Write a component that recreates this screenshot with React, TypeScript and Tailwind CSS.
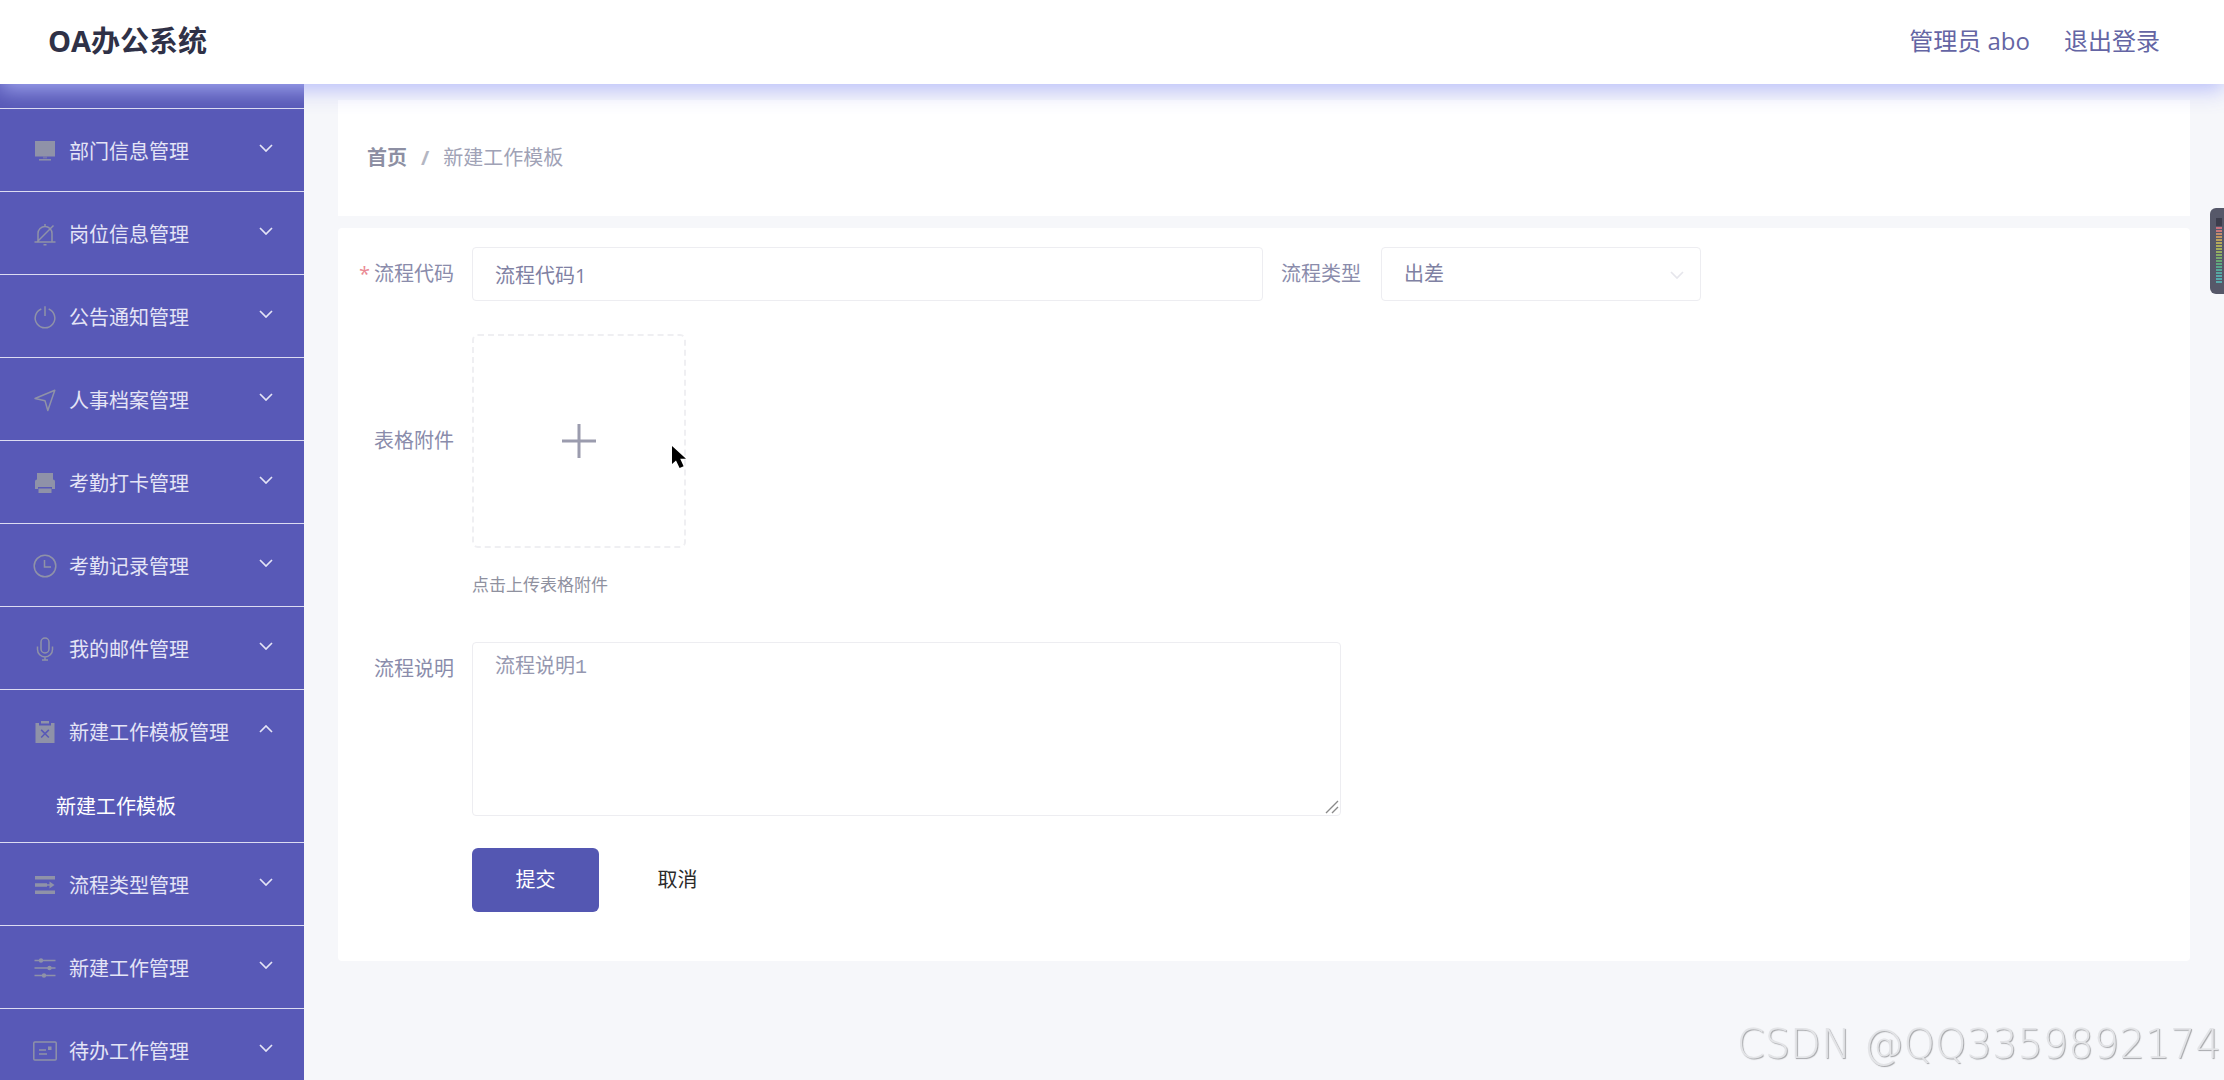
import React, { useState } from "react";

const S = { fill: "none", stroke: "currentColor", strokeWidth: 1.5 } as const;

const icons: Record<string, React.ReactNode> = {
  monitor: (
    <>
      <rect x="2" y="2" width="20" height="15.5" fill="currentColor" />
      <path d="M10 17.5h4v2h-4z" fill="currentColor" opacity=".5" />
      <path d="M6 20.8h12" {...S} />
    </>
  ),
  bell: (
    <>
      <path d="M5 20v-8.500a7 7 0 0 1 14 0V20M1.500 20h21M12 2v2.500M10.500 22.800h3M3.500 20.500 20.500 3.500" {...S} />
    </>
  ),
  power: <path d="M8.300 4a9.800 9.800 0 1 0 7.400 0M12 1.200v9.800" {...S} />,
  position: <path d="M2 10.500 21.800 2.200 14.800 22.500 12 12.800z" {...S} strokeLinejoin="round" />,
  printer: (
    <>
      <path d="M4 2h16v7H4z" fill="currentColor" />
      <path d="M2 10.500a2 2 0 0 1 2-2h16a2 2 0 0 1 2 2V18h-3v-2H5v2H2z" fill="currentColor" />
      <rect x="5.500" y="17.500" width="13" height="4.500" fill="currentColor" />
    </>
  ),
  clock: (
    <>
      <circle cx="12" cy="12" r="10.800" {...S} />
      <path d="M11.500 6v7H18" {...S} />
    </>
  ),
  mic: (
    <>
      <rect x="8" y="1" width="8" height="15" rx="4" {...S} />
      <path d="M4.500 9.500v3a7.500 7.500 0 0 0 15 0v-3M12 20v3M9 23h6" {...S} />
    </>
  ),
  clipboard: (
    <>
      <path
        fillRule="evenodd"
        d="M2.500 3H6v2.500h12V3h3.500v20h-19zM8.700 9.300 7.600 10.400 10.900 13.700 7.600 17l1.100 1.100 3.300-3.300 3.300 3.300 1.100-1.100-3.300-3.300 3.300-3.300-1.100-1.100-3.300 3.300z"
        fill="currentColor"
      />
      <rect x="8" y="1" width="8" height="2.500" fill="currentColor" />
    </>
  ),
  operate: (
    <>
      <path d="M2 3h20v3.600H2zM2 10.200h12v3.600H2zM2 17.400h20V21H2z" fill="currentColor" />
      <path d="M16.500 8.500v7l5-3.500z" fill="currentColor" />
      <path d="M14 12h4" {...S} />
    </>
  ),
  sliders: (
    <>
      <path d="M1.500 4.500h21M1.500 12h21M1.500 19.500h21" {...S} />
      <circle cx="8" cy="4.500" r="2.200" fill="currentColor" />
      <circle cx="16.500" cy="12" r="2.200" fill="currentColor" />
      <circle cx="11" cy="19.500" r="2.200" fill="currentColor" />
    </>
  ),
  postcard: (
    <>
      <rect x="0.800" y="3" width="22.400" height="18" rx="1" {...S} />
      <path d="M6 11h7M6 15h8" {...S} />
      <rect x="15" y="7.500" width="3.500" height="3.500" fill="currentColor" />
    </>
  ),
};

type Item = { icon: string; label: string; children?: string[] };

const menu: Item[] = [
  { icon: "monitor", label: "部门信息管理" },
  { icon: "bell", label: "岗位信息管理" },
  { icon: "power", label: "公告通知管理" },
  { icon: "position", label: "人事档案管理" },
  { icon: "printer", label: "考勤打卡管理" },
  { icon: "clock", label: "考勤记录管理" },
  { icon: "mic", label: "我的邮件管理" },
  { icon: "clipboard", label: "新建工作模板管理", children: ["新建工作模板"] },
  { icon: "operate", label: "流程类型管理" },
  { icon: "sliders", label: "新建工作管理" },
  { icon: "postcard", label: "待办工作管理" },
];

function Chevron({ up = false, className = "" }: { up?: boolean; className?: string }) {
  return (
    <svg viewBox="0 0 14 8" className={className} aria-hidden="true">
      <path d={up ? "M1 7l6-6 6 6" : "M1 1l6 6 6-6"} fill="none" stroke="currentColor" strokeWidth="1.700" />
    </svg>
  );
}

function Sidebar() {
  return (
    <aside className="w-[304px] shrink-0 overflow-hidden bg-[#5859b7]">
      <nav className="pt-6">
        <ul>
          {menu.map((m) => (
            <li key={m.label} className="border-t border-[#dcdcf2]">
              <button type="button" className="flex h-[82px] w-full items-center pr-[31px] pl-[33px] text-left">
                <svg viewBox="0 0 24 24" className="mt-0.5 h-6 w-6 shrink-0 text-[#8f92a8]" aria-hidden="true">
                  {icons[m.icon]}
                </svg>
                <span className="ml-3 flex-1 pt-1 whitespace-nowrap text-[#e4e4f6]">{m.label}</span>
                <Chevron up={!!m.children} className="mb-1 w-[14px] shrink-0 text-[#e4e4f6]" />
              </button>
              {m.children?.map((c) => (
                <a key={c} href="#template" className="block h-[70px] pt-5 pl-14 text-white">
                  {c}
                </a>
              ))}
            </li>
          ))}
        </ul>
      </nav>
    </aside>
  );
}

const levels = [
  "bg-[#c8707c]", "bg-[#c8787a]", "bg-[#c48a6c]", "bg-[#c09660]", "bg-[#bca05c]",
  "bg-[#b6a85a]", "bg-[#aeac5a]", "bg-[#a4ae5c]", "bg-[#98ae60]", "bg-[#88ac66]",
  "bg-[#78aa6c]", "bg-[#68a874]", "bg-[#5ea880]", "bg-[#58a88c]", "bg-[#54a898]",
  "bg-[#54a8a2]", "bg-[#56aaac]", "bg-[#56aaac]", "bg-[#56aaac]",
];

function LevelMeter() {
  return (
    <div className="fixed top-[208px] right-0 z-20 h-[86px] w-[14px] rounded-l-md bg-[#565869] pl-[6px]">
      <div className="mt-[10px] mb-px h-2 w-[6px] bg-[#3c3d4c]" />
      <div className="flex w-[6px] flex-col gap-px">
        {levels.map((c, i) => (
          <span key={i} className={`h-[2px] ${c}`} />
        ))}
      </div>
    </div>
  );
}

const label = "shrink-0 text-right whitespace-nowrap text-[#8a8cab]";
const field = "rounded border border-[#ededf1] bg-white text-[#7f81a3] outline-none";

export default function App() {
  const [code, setCode] = useState("流程代码1");
  const [kind, setKind] = useState("出差");
  const [note, setNote] = useState("流程说明1");

  return (
    <div className="flex h-screen flex-col overflow-hidden bg-[#f6f7fa] font-['Open_Sans','Noto_Sans_CJK_SC',sans-serif] text-[20px] leading-[30px]">
      <header className="relative z-10 flex h-[84px] shrink-0 items-center justify-between bg-white pr-16 pb-0.5 pl-12 shadow-[0_6px_20px_rgba(174,180,249,0.85)]">
        <h1 className="text-[29px] font-bold text-[#2f3147]">OA办公系统</h1>
        <div className="flex gap-[34px] text-[24px] text-[#6465a4]">
          <span>管理员 abo</span>
          <a href="#logout">退出登录</a>
        </div>
      </header>

      <div className="flex min-h-0 flex-1">
        <Sidebar />
        <main className="flex min-w-0 flex-1 flex-col gap-3 px-[34px] pt-4">
          <nav aria-label="面包屑" className="flex h-[116px] shrink-0 items-center bg-white px-[29px]">
            <a href="#home" className="font-bold text-[#8d8fa3]">首页</a>
            <span className="px-[14px] font-bold text-[#b4b6c2]">/</span>
            <span className="text-[#a0a2b6]">新建工作模板</span>
          </nav>

          <form className="shrink-0 rounded bg-white pt-[19px] pb-[49px]" onSubmit={(e) => e.preventDefault()}>
            <div className="flex items-center">
              <label htmlFor="code" className={`${label} w-[116px]`}>
                <span className="mr-1 text-[#ea8a94]">*</span>
                流程代码
              </label>
              <input
                id="code"
                value={code}
                onChange={(e) => setCode(e.target.value)}
                className={`${field} ml-[18px] h-[54px] w-[791px] px-[22px]`}
              />
              <label htmlFor="kind" className={`${label} ml-[18px]`}>流程类型</label>
              <div className="relative ml-5 w-[320px]">
                <select
                  id="kind"
                  value={kind}
                  onChange={(e) => setKind(e.target.value)}
                  className={`${field} h-[54px] w-full appearance-none px-[22px]`}
                >
                  <option>出差</option>
                  <option>请假</option>
                </select>
                <Chevron className="pointer-events-none absolute top-[24px] right-[17px] w-[14px] text-[#e6e6ec]" />
              </div>
            </div>

            <div className="mt-[33px] flex">
              <label htmlFor="file" className={`${label} w-[116px] pt-[92px]`}>表格附件</label>
              <div className="ml-[18px]">
                <div className="relative">
                  <button
                    id="file"
                    type="button"
                    aria-label="表格附件"
                    className="flex h-[214px] w-[214px] items-center justify-center rounded-md border-2 border-dashed border-[#efeff2]"
                  >
                    <svg viewBox="0 0 34 34" className="w-[34px] text-[#9b9cae]" aria-hidden="true">
                      <path d="M17 0v34M0 17h34" stroke="currentColor" strokeWidth="3" />
                    </svg>
                  </button>
                  <svg viewBox="0 0 14 22" className="absolute top-[112px] left-[200px] w-[14px]" aria-hidden="true">
                    <path d="M0 0v18l4-3.600L7.600 22l4-1.800L8.200 12.800H14z" fill="#000" />
                  </svg>
                </div>
                <p className="mt-[22px] text-[17px] text-[#8f919f]">点击上传表格附件</p>
              </div>
            </div>

            <div className="mt-[42px] flex">
              <label htmlFor="note" className={`${label} w-[116px] pt-3`}>流程说明</label>
              <div className="relative ml-[18px] flex">
                <textarea
                  id="note"
                  value={note}
                  onChange={(e) => setNote(e.target.value)}
                  className={`${field} h-[174px] w-[869px] resize px-[22px] py-[10px] font-['Liberation_Mono','Noto_Sans_CJK_SC',monospace] text-[#9698b0] [&::-webkit-resizer]:bg-transparent`}
                />
                <svg viewBox="0 0 14 14" className="pointer-events-none absolute right-[2px] bottom-[2px] w-[14px] text-[#8a8a8a]" aria-hidden="true">
                  <path d="M1 13 13 1M7 13l6-6" fill="none" stroke="currentColor" strokeWidth="1.400" />
                </svg>
              </div>
            </div>

            <div className="mt-8 ml-[134px] flex">
              <button type="submit" className="h-16 w-[127px] rounded-md bg-[#5457b2] text-white">提交</button>
              <button type="button" className="ml-[15px] h-16 w-[127px] text-[#2b2b2b]">取消</button>
            </div>
          </form>
        </main>
      </div>

      <LevelMeter />
      <div className="pointer-events-none fixed right-[3px] bottom-[6px] z-20 font-['DejaVu_Sans',sans-serif] text-[40px] leading-[60px] font-extralight text-[#e3e4e7] [text-shadow:1px_1px_1px_#a4a5a8]">
        CSDN @QQ3359892174
      </div>
    </div>
  );
}
